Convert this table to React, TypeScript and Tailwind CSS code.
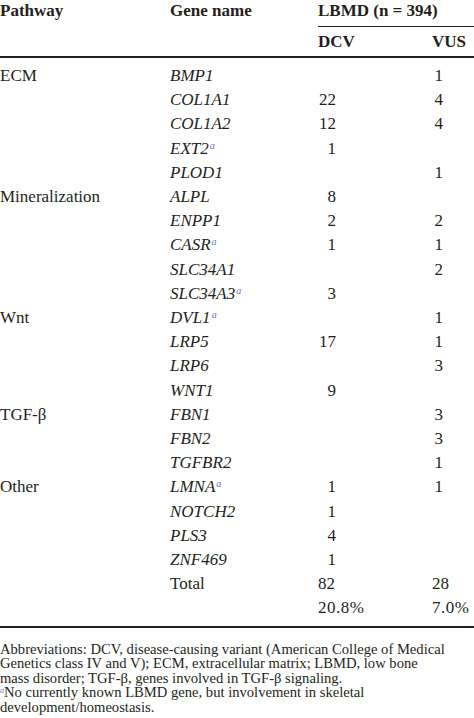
type Row = {
  pathway?: string;
  gene: string;
  sup?: boolean;
  dcv?: string;
  vus?: string;
};

const rows: Row[] = [
  { pathway: "ECM", gene: "BMP1", vus: "1" },
  { gene: "COL1A1", dcv: "22", vus: "4" },
  { gene: "COL1A2", dcv: "12", vus: "4" },
  { gene: "EXT2", sup: true, dcv: "1" },
  { gene: "PLOD1", vus: "1" },
  { pathway: "Mineralization", gene: "ALPL", dcv: "8" },
  { gene: "ENPP1", dcv: "2", vus: "2" },
  { gene: "CASR", sup: true, dcv: "1", vus: "1" },
  { gene: "SLC34A1", vus: "2" },
  { gene: "SLC34A3", sup: true, dcv: "3" },
  { pathway: "Wnt", gene: "DVL1", sup: true, vus: "1" },
  { gene: "LRP5", dcv: "17", vus: "1" },
  { gene: "LRP6", vus: "3" },
  { gene: "WNT1", dcv: "9" },
  { pathway: "TGF-β", gene: "FBN1", vus: "3" },
  { gene: "FBN2", vus: "3" },
  { gene: "TGFBR2", vus: "1" },
  { pathway: "Other", gene: "LMNA", sup: true, dcv: "1", vus: "1" },
  { gene: "NOTCH2", dcv: "1" },
  { gene: "PLS3", dcv: "4" },
  { gene: "ZNF469", dcv: "1" },
];

const cols = "grid grid-cols-[170px_148px_114px_42px]";

export default function App() {
  return (
    <div
      className="w-[474px] h-[718px] bg-white text-[#231f20] overflow-hidden"
      style={{ fontFamily: '"Liberation Serif", "Times New Roman", serif' }}
    >
      {/* header */}
      <div className={`${cols} text-[17px] font-bold leading-[17px]`}>
        <div className="row-span-2 pt-[2px]">Pathway</div>
        <div className="row-span-2 pt-[2px]">Gene name</div>
        <div className="col-span-2 pt-[2px] pb-[7px] border-b border-[#231f20]">
          LBMD (n = 394)
        </div>
        <div className="pt-[6px] pb-[6px]">DCV</div>
        <div className="pt-[6px] pb-[6px]">VUS</div>
      </div>
      <div className="h-[2px] bg-[#231f20]" />

      {/* body */}
      <div className="pt-[6px] text-[17px] leading-[24.2px]">
        {rows.map((r) => (
          <div key={r.gene} className={cols}>
            <div>{r.pathway ?? ""}</div>
            <div className="italic">
              {r.gene}
              {r.sup && (
                <sup className="text-[10px] text-[#6a72c9] ml-[1px]">a</sup>
              )}
            </div>
            <div className="text-right pr-[96px]">{r.dcv ?? ""}</div>
            <div className="text-right pr-[31px]">{r.vus ?? ""}</div>
          </div>
        ))}
        <div className={cols}>
          <div />
          <div>Total</div>
          <div>82</div>
          <div>28</div>
        </div>
        <div className={`${cols} tracking-[0.5px]`}>
          <div />
          <div />
          <div>20.8%</div>
          <div className="whitespace-nowrap">7.0%</div>
        </div>
      </div>
      <div className="mt-[5px] h-[2px] bg-[#231f20]" />

      {/* footnotes */}
      <div className="pt-[14px] text-[14.6px] leading-[14.5px]">
        <p className="whitespace-nowrap">
          Abbreviations: DCV, disease-causing variant (American College of Medical
        </p>
        <p>
          Genetics class IV and V); ECM, extracellular matrix; LBMD, low bone
        </p>
        <p>mass disorder; TGF-β, genes involved in TGF-β signaling.</p>
        <p>
          <sup className="text-[8px] italic text-[#6a72c9]">a</sup>
          No currently known LBMD gene, but involvement in skeletal
        </p>
        <p>development/homeostasis.</p>
      </div>
    </div>
  );
}
